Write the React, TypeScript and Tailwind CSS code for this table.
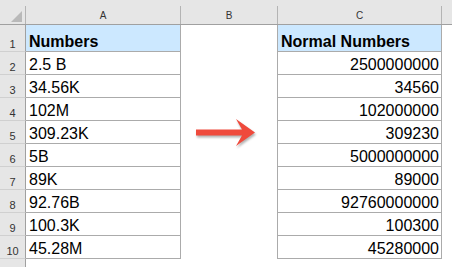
import React from 'react';

const rows = [
  { raw: '2.5 B', value: '2500000000' },
  { raw: '34.56K', value: '34560' },
  { raw: '102M', value: '102000000' },
  { raw: '309.23K', value: '309230' },
  { raw: '5B', value: '5000000000' },
  { raw: '89K', value: '89000' },
  { raw: '92.76B', value: '92760000000' },
  { raw: '100.3K', value: '100300' },
  { raw: '45.28M', value: '45280000' },
];

function HeaderCell({ label, width }: { label: string; width: string }) {
  return (
    <div className={`flex ${width}`}>
      <div className="flex-1 flex justify-center pt-[10px] text-[10px] leading-[12px] text-[#333]">{label}</div>
      <div className="w-px mt-[6px] bg-[#b4b4b4]" />
    </div>
  );
}

function RowNum({ n }: { n: number }) {
  return (
    <div className="w-[26px] flex items-end justify-center bg-[#e6e6e6] border-r border-b border-r-[#a0a0a0] border-b-[#d0d0d0] text-[11px] leading-[14px] text-[#333]">
      {n}
    </div>
  );
}

export default function App() {
  return (
    <div className="relative w-[452px] h-[267px] overflow-hidden bg-white text-black font-['Liberation_Sans',Arial,sans-serif]">
      {/* column letters */}
      <div className="flex h-[25px] bg-[#e6e6e6] border-b border-[#a0a0a0]">
        <div className="flex w-[26px]">
          <svg className="flex-1" viewBox="0 0 25 24" width="25" height="24">
            <polygon points="11,22 22,22 22,11" fill="#b9b9b9" />
          </svg>
          <div className="w-px mt-[6px] bg-[#b4b4b4]" />
        </div>
        <HeaderCell label="A" width="w-[155px]" />
        <HeaderCell label="B" width="w-[97px]" />
        <HeaderCell label="C" width="w-[164px]" />
      </div>

      {/* title row */}
      <div className="flex h-[27px]">
        <RowNum n={1} />
        <div className="w-[155px] flex items-end pl-[3px] bg-[#cce8ff] border-r border-b border-[#ababab] text-[16px] leading-[18px] font-bold">
          Numbers
        </div>
        <div className="w-[96px]" />
        <div className="w-[165px] flex items-end pl-[3px] bg-[#cce8ff] border-x border-b border-[#ababab] text-[16px] leading-[18px] font-bold">
          Normal Numbers
        </div>
      </div>

      {rows.map((r, i) => (
        <div key={r.raw} className="flex h-[23px]">
          <RowNum n={i + 2} />
          <div className="w-[155px] flex items-end pl-[3px] border-r border-b border-[#ababab] text-[16px] leading-[18px]">
            {r.raw}
          </div>
          <div className="w-[96px]" />
          <div className="w-[165px] flex items-end justify-end pr-[2px] border-x border-b border-[#ababab] text-[16px] leading-[18px]">
            {r.value}
          </div>
        </div>
      ))}

      <div className="flex h-[23px]">
        <RowNum n={11} />
      </div>

      {/* floating arrow shape */}
      <svg
        className="absolute left-[190px] top-[115px] drop-shadow-[1px_2px_1px_rgba(0,0,0,0.3)]"
        width="70"
        height="40"
        viewBox="0 0 70 40"
      >
        <polygon points="6,14.5 52,14.5 46,4 65,17.5 46,31 52,20.5 6,20.5" fill="#ef4a3c" />
      </svg>
    </div>
  );
}
